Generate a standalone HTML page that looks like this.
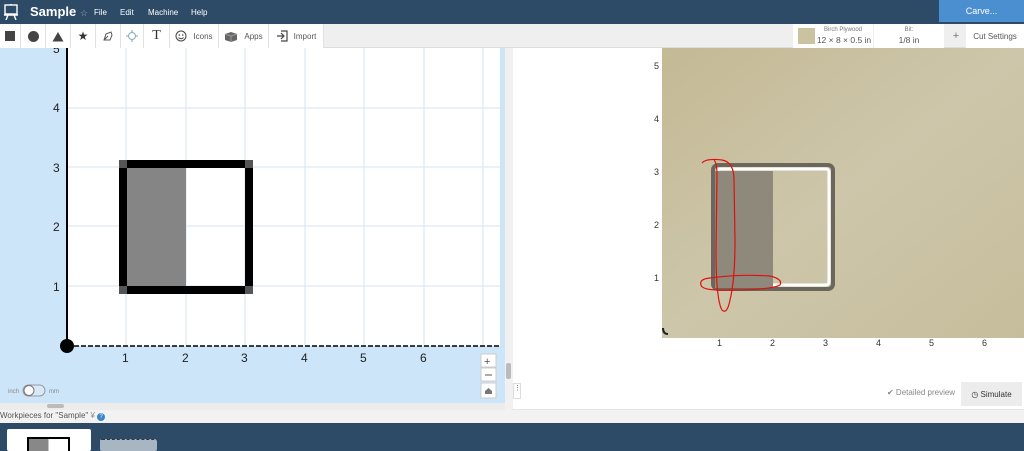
<!DOCTYPE html>
<html><head><meta charset="utf-8"><style>
*{margin:0;padding:0;box-sizing:border-box}
body{width:1024px;height:451px;overflow:hidden;font-family:"Liberation Sans",sans-serif;background:#fff;position:relative}
.a{position:absolute}
.hdr{left:0;top:0;width:1024px;height:24px;background:#2d4b67;color:#fff}
.tb{left:0;top:24px;width:1024px;height:24px;background:#efefef;border-bottom:1px solid #ddd}
.btn{position:absolute;top:0;height:24px;background:#fff;border-right:1px solid #e2e2e2;font-size:8px;color:#555;display:flex;align-items:center;justify-content:center;gap:6px}
</style></head><body>
<div class="a hdr">
 <svg class="a" style="left:4px;top:4px" width="14" height="16" viewBox="0 0 14 16"><rect x="1" y="1" width="12" height="9" fill="none" stroke="#fff" stroke-width="1.4"/><path d="M0 11h14M4 11l-2 5M10 11l2 5M7 0v1" stroke="#fff" stroke-width="1.4"/></svg>
 <div class="a" style="left:30px;top:4px;font-size:13px;font-weight:bold">Sample <span style="font-size:9px;color:#9ab;font-weight:normal">☆</span></div>
 <div class="a" style="left:94px;top:8px;font-size:8px">File</div>
 <div class="a" style="left:120px;top:8px;font-size:8px">Edit</div>
 <div class="a" style="left:148px;top:8px;font-size:8px">Machine</div>
 <div class="a" style="left:191px;top:8px;font-size:8px">Help</div>
 <div class="a" style="left:939px;top:0;width:85px;height:22px;background:#4b8fd1;font-size:9px;display:flex;align-items:center;justify-content:center">Carve...</div>
</div>
<div class="a tb">
 <div class="btn" style="left:0;width:21px"><div style="width:10px;height:10px;background:#444"></div></div>
 <div class="btn" style="left:21px;width:25px"><div style="width:11px;height:11px;background:#444;border-radius:50%"></div></div>
 <div class="btn" style="left:46px;width:25px"><svg width="12" height="11"><path d="M6 1L11.5 10.5H.5Z" fill="#444"/></svg></div>
 <div class="btn" style="left:71px;width:25px;font-size:12px;color:#333">★</div>
 <div class="btn" style="left:96px;width:25px"><svg width="12" height="12"><path d="M2 10l2-6 5-2 1 3-2 5zM2 10l4-4" fill="none" stroke="#555"/></svg></div>
 <div class="btn" style="left:121px;width:23px"><svg width="12" height="12"><circle cx="6" cy="6" r="3.5" fill="none" stroke="#8ab"/><path d="M6 0v3M6 9v3M0 6h3M9 6h3" stroke="#8ab"/></svg></div>
 <div class="btn" style="left:144px;width:26px;font-size:14px;font-family:'Liberation Serif',serif;color:#333">T</div>
 <div class="btn" style="left:170px;width:49px"><svg width="12" height="12"><circle cx="6" cy="6" r="5" fill="none" stroke="#444"/><circle cx="4.3" cy="5" r=".8" fill="#444"/><circle cx="7.7" cy="5" r=".8" fill="#444"/><path d="M3.5 7.5q2.5 2.5 5 0" fill="none" stroke="#444"/></svg>Icons</div>
 <div class="btn" style="left:219px;width:50px"><svg width="14" height="11"><path d="M1 3l6-2 6 2v6l-6 2-6-2z" fill="#666"/><path d="M1 3l6 2 6-2M7 5v6" stroke="#999" fill="none"/></svg>Apps</div>
 <div class="btn" style="left:269px;width:55px"><svg width="12" height="12"><path d="M5 1h6v10H5M1 6h7M5 3l3 3-3 3" fill="none" stroke="#444" stroke-width="1.2"/></svg>Import</div>
 <div class="a" style="left:793px;top:0;width:80px;height:24px;background:#fff"></div>
 <div class="a" style="left:798px;top:4px;width:17px;height:16px;background:#cbc2a0"></div>
 <div class="a" style="left:818px;top:3px;width:50px;text-align:center;font-size:6px;color:#777">Birch Plywood</div>
 <div class="a" style="left:816px;top:11px;width:56px;text-align:center;font-size:8.5px;color:#555">12 × 8 × 0.5 in</div>
 <div class="a" style="left:874px;top:0;width:70px;height:24px;background:#fff"></div>
 <div class="a" style="left:874px;top:3px;width:70px;text-align:center;font-size:6px;color:#777">Bit:</div>
 <div class="a" style="left:874px;top:11px;width:70px;text-align:center;font-size:8.5px;color:#555">1/8 in</div>
 <div class="a" style="left:946px;top:6px;width:20px;text-align:center;font-size:11px;color:#777">+</div>
 <div class="a" style="left:966px;top:0;width:58px;height:24px;background:#fff;font-size:8px;color:#555;display:flex;align-items:center;justify-content:center">Cut Settings</div>
</div>
<!-- left canvas -->
<div class="a" style="left:0;top:48px;width:505px;height:355px;background:#cde5f8"></div>
<svg class="a" style="left:0;top:48px" width="505" height="355" font-family="Liberation Sans" font-size="12" fill="#222">
 <rect x="67" y="0" width="433" height="298" fill="#fff"/>
 <g stroke="#d4e4f2" stroke-width="1">
  <path d="M126 0v298M186 0v298M245 0v298M305 0v298M364 0v298M424 0v298M483 0v298M67 60h433M67 119h433M67 178h433M67 238h433"/>
 </g>
 <path d="M67 0v298" stroke="#000" stroke-width="2"/>
 <path d="M67 298h433" stroke="#000" stroke-width="1.5" stroke-dasharray="5 2"/>
 <circle cx="67" cy="298" r="7" fill="#000"/>
 <text x="53" y="64">4</text><text x="53" y="124">3</text><text x="53" y="183">2</text><text x="53" y="243">1</text><text x="53" y="5">5</text>
 <text x="122" y="314">1</text><text x="182" y="314">2</text><text x="241" y="314">3</text><text x="301" y="314">4</text><text x="360" y="314">5</text><text x="420" y="314">6</text><text x="481" y="314">7</text>
 <rect x="127" y="120" width="59" height="118" fill="#858585"/>
 <rect x="123" y="116" width="126" height="126" rx="4" fill="none" stroke="#000" stroke-width="8"/>
 <g fill="#555"><rect x="119" y="112" width="8" height="8"/><rect x="245" y="112" width="8" height="8"/><rect x="119" y="238" width="8" height="8"/><rect x="245" y="238" width="8" height="8"/></g>
 <rect x="481" y="306" width="15" height="13" fill="#fff" stroke="#ccc"/><text x="484" y="317" font-size="11" fill="#555">+</text>
 <rect x="481" y="320" width="15" height="13" fill="#fff" stroke="#ccc"/><path d="M485 327h7" stroke="#555"/>
 <rect x="481" y="335" width="15" height="15" fill="#fff" stroke="#ccc"/><path d="M485 343l3.5-3 3.5 3v3h-7z" fill="#777"/>
 <text x="8" y="345" font-size="6" fill="#888">inch</text>
 <rect x="23" y="337" width="22" height="11" rx="5.5" fill="#d8e8f6" stroke="#99a"/>
 <circle cx="29" cy="342.5" r="5" fill="#fff" stroke="#777"/>
 <text x="49" y="345" font-size="6" fill="#888">mm</text>
</svg>
<div class="a" style="left:505px;top:48px;width:8px;height:362px;background:#f1f1f1"></div>
<div class="a" style="left:506px;top:363px;width:5px;height:16px;background:#bbb;border-radius:2px"></div>
<div class="a" style="left:0;top:403px;width:505px;height:7px;background:#ececec"></div>
<div class="a" style="left:47px;top:404px;width:17px;height:4px;background:#bbb;border-radius:2px"></div>
<div class="a" style="left:513px;top:383px;width:8px;height:16px;background:#fff;border:1px solid #ddd;font-size:7px;text-align:center;color:#555">⋮</div>
<!-- right -->
<svg class="a" style="left:640px;top:48px" width="384" height="300" font-family="Liberation Sans" font-size="9" fill="#333">
 <defs><linearGradient id="w" x1="0" y1="0" x2="1" y2="1"><stop offset="0" stop-color="#c4b995"/><stop offset=".5" stop-color="#cdc6aa"/><stop offset="1" stop-color="#c6bd9b"/></linearGradient></defs>
 <rect x="22" y="0" width="362" height="290" fill="url(#w)"/>
 <text x="14" y="21">5</text><text x="14" y="74">4</text><text x="14" y="127">3</text><text x="14" y="180">2</text><text x="14" y="233">1</text>
 <text x="77" y="298">1</text><text x="130" y="298">2</text><text x="183" y="298">3</text><text x="236" y="298">4</text><text x="289" y="298">5</text><text x="342" y="298">6</text>
 <path d="M28 286q-5 0-5-6" stroke="#222" stroke-width="2" fill="none"/>
 <rect x="73" y="117" width="120" height="124" rx="5" fill="none" stroke="#6b675c" stroke-width="4"/>
 <rect x="77" y="121" width="112" height="116" rx="3" fill="none" stroke="#fff" stroke-width="3"/>
 <rect x="75" y="123" width="58" height="117" fill="#8e897a"/>
 <g stroke="#e01010" stroke-width="1.2" fill="none">
  <path d="M62 115q4-5 20-3q12 2 12 20l1 60q0 40-5 60q-3 15-8 10q-6-10-6-60l1-75q0-12-3-15"/>
  <path d="M70 230q30-4 60-2q13 3 10 9q-10 5-50 5q-28 1-29-5q-2-6 9-7"/>
 </g>
</svg>
<div class="a" style="left:887px;top:388px;font-size:8px;color:#888">✔ Detailed preview</div>
<div class="a" style="left:961px;top:382px;width:61px;height:24px;background:#ececec;font-size:8px;color:#333;display:flex;align-items:center;justify-content:center">◷ Simulate</div>
<div class="a" style="left:512px;top:409px;width:512px;height:1px;background:#e5e5e5"></div>
<!-- bottom -->
<div class="a" style="left:0;top:410px;width:1024px;height:13px;background:#f2f2f2;font-size:8px;color:#555;padding-top:1px">Workpieces for "Sample" <span style="color:#888">¥</span> <span style="display:inline-block;width:8px;height:8px;border-radius:50%;background:#3a86c8;color:#fff;font-size:6px;text-align:center;line-height:8px">?</span></div>
<div class="a" style="left:0;top:423px;width:1024px;height:28px;background:#2d4b67"></div>
<div class="a" style="left:7px;top:429px;width:84px;height:22px;background:#fff;border-radius:2px"></div>
<div class="a" style="left:27px;top:437px;width:43px;height:14px;border:2px solid #000;border-bottom:none;background:linear-gradient(90deg,#888 50%,#fff 50%)"></div>
<div class="a" style="left:100px;top:439px;width:57px;height:12px;background:#a8b6c4;border-radius:2px;border-top:1px dashed #333"></div>
</body></html>
